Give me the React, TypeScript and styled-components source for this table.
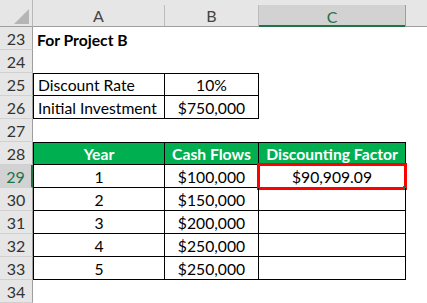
import React from "react";
import styled, { createGlobalStyle, css } from "styled-components";

const GlobalStyle = createGlobalStyle`
  html, body {
    margin: 0;
    padding: 0;
    background: #ffffff;
  }
  body {
    font-family: Lato, "Liberation Sans", sans-serif;
  }
`;

const Sheet = styled.div`
  display: grid;
  grid-template-columns: 33px 132px 94px 147px 1fr;
  grid-template-rows: 27px repeat(12, 23px);
  width: 427px;
  height: 303px;
  overflow: hidden;
  font-size: 15.7px;
  color: #000;
`;

const Corner = styled.div`
  background: #e6e6e6;
  border-right: 1px solid #b8b8b8;
  border-bottom: 1px solid #9e9e9e;
  display: flex;
  align-items: flex-end;
  justify-content: flex-end;
  padding: 0 3px 2px 0;
`;

interface ColHeadProps {
  readonly $selected?: boolean;
  readonly $last?: boolean;
}

const ColHeadCell = styled.div`
  background: #e6e6e6;
  border-bottom: 1px solid #9e9e9e;
  padding-top: 5px;
  display: flex;
`;

const ColHeadLabel = styled.div<ColHeadProps>`
  flex: 1;
  display: flex;
  align-items: center;
  justify-content: center;
  font-size: 16px;
  color: #444;
  border-right: 1px solid #bcbcbc;
  ${({ $selected }) =>
    $selected &&
    css`
      background: #d2d2d2;
      color: #217346;
      border-right-color: #9e9e9e;
      box-shadow: inset 0 -2px 0 #217346;
      margin-bottom: -1px;
    `}
  ${({ $last }) =>
    $last &&
    css`
      border-right: none;
    `}
`;

interface RowHeadProps {
  readonly $selected?: boolean;
}

const RowHead = styled.div<RowHeadProps>`
  background: #e6e6e6;
  border-right: 1px solid #9e9e9e;
  border-bottom: 1px solid #d0d0d0;
  display: flex;
  align-items: flex-end;
  justify-content: center;
  padding-bottom: 1px;
  font-size: 16px;
  color: #333;
  ${({ $selected }) =>
    $selected &&
    css`
      background: #d2d2d2;
      color: #217346;
      border-right: 2px solid #217346;
    `}
`;

interface CellProps {
  readonly $box?: boolean;
  readonly $top?: boolean;
  readonly $left?: boolean;
  readonly $align?: "left" | "center";
  readonly $bold?: boolean;
  readonly $head?: boolean;
}

const Cell = styled.div<CellProps>`
  position: relative;
  display: flex;
  align-items: flex-end;
  padding: 0 4px 1px;
  white-space: nowrap;
  justify-content: ${({ $align }) => ($align === "center" ? "center" : "flex-start")};
  font-weight: ${({ $bold }) => ($bold ? 700 : 400)};
  ${({ $box }) =>
    $box &&
    css`
      border-right: 1px solid #000;
      border-bottom: 1px solid #000;
    `}
  ${({ $top }) =>
    $top &&
    css`
      border-top: 1px solid #000;
    `}
  ${({ $left }) =>
    $left &&
    css`
      border-left: 1px solid #000;
    `}
  ${({ $head }) =>
    $head &&
    css`
      background: #00b050;
      color: #fff;
      font-weight: 700;
    `}
`;

const Selection = styled.div`
  position: absolute;
  top: -2px;
  left: -2px;
  right: -2px;
  bottom: -3px;
  border: 3px solid #ff0000;
  pointer-events: none;
`;

const FillHandle = styled.div`
  position: absolute;
  right: -2px;
  bottom: -2px;
  width: 3px;
  height: 3px;
  background: #217346;
`;

const Blank = styled.div`
  background: #fff;
`;

const cashFlows = [
  { year: "1", flow: "$100,000", factor: "$90,909.09" },
  { year: "2", flow: "$150,000", factor: "" },
  { year: "3", flow: "$200,000", factor: "" },
  { year: "4", flow: "$250,000", factor: "" },
  { year: "5", flow: "$250,000", factor: "" },
];

const App = () => {
  return (
    <>
      <GlobalStyle />
      <Sheet>
        <Corner>
          <svg width="15" height="15" viewBox="0 0 15 15">
            <polygon points="15,0 15,15 0,15" fill="#b5b5b5" />
          </svg>
        </Corner>
        <ColHeadCell>
          <ColHeadLabel>A</ColHeadLabel>
        </ColHeadCell>
        <ColHeadCell>
          <ColHeadLabel>B</ColHeadLabel>
        </ColHeadCell>
        <ColHeadCell>
          <ColHeadLabel $selected>C</ColHeadLabel>
        </ColHeadCell>
        <ColHeadCell>
          <ColHeadLabel $last />
        </ColHeadCell>

        <RowHead>23</RowHead>
        <Cell $bold>For Project B</Cell>
        <Blank />
        <Blank />
        <Blank />

        <RowHead>24</RowHead>
        <Blank />
        <Blank />
        <Blank />
        <Blank />

        <RowHead>25</RowHead>
        <Cell $box $top $left>Discount Rate</Cell>
        <Cell $box $top $align="center">10%</Cell>
        <Blank />
        <Blank />

        <RowHead>26</RowHead>
        <Cell $box $left>Initial Investment</Cell>
        <Cell $box $align="center">$750,000</Cell>
        <Blank />
        <Blank />

        <RowHead>27</RowHead>
        <Blank />
        <Blank />
        <Blank />
        <Blank />

        <RowHead>28</RowHead>
        <Cell $box $top $left $head $align="center">Year</Cell>
        <Cell $box $top $head $align="center">Cash Flows</Cell>
        <Cell $box $top $head $align="center">Discounting Factor</Cell>
        <Blank />

        {cashFlows.map((row, i) => (
          <React.Fragment key={row.year}>
            <RowHead $selected={i === 0}>{29 + i}</RowHead>
            <Cell $box $left $align="center">{row.year}</Cell>
            <Cell $box $align="center">{row.flow}</Cell>
            <Cell $box $align="center">
              {row.factor}
              {i === 0 && (
                <Selection>
                  <FillHandle />
                </Selection>
              )}
            </Cell>
            <Blank />
          </React.Fragment>
        ))}

        <RowHead>34</RowHead>
        <Blank />
        <Blank />
        <Blank />
        <Blank />
      </Sheet>
    </>
  );
};

export default App;
